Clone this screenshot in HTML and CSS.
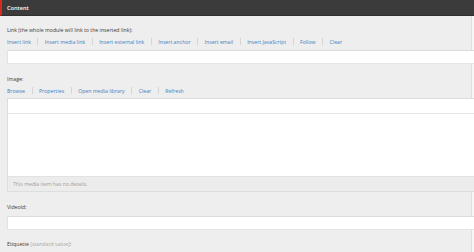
FILE: index.html
```html
<!DOCTYPE html>
<html>
<head>
<meta charset="utf-8">
<link rel="stylesheet" href="styles.css">
</head>
<body>
<div class="header">Content</div>
<div class="panel">
  <div class="label first">Link (the whole module will link to the inserted link):</div>
  <div class="links">
    <a>Insert link</a><span class="sep"></span>
    <a>Insert media link</a><span class="sep"></span>
    <a>Insert external link</a><span class="sep"></span>
    <a>Insert anchor</a><span class="sep"></span>
    <a>Insert email</a><span class="sep"></span>
    <a>Insert JavaScript</a><span class="sep"></span>
    <a>Follow</a><span class="sep"></span>
    <a>Clear</a>
  </div>
  <div class="input"></div>

  <div class="label gap">Image:</div>
  <div class="links">
    <a>Browse</a><span class="sep"></span>
    <a>Properties</a><span class="sep"></span>
    <a>Open media library</a><span class="sep"></span>
    <a>Clear</a><span class="sep"></span>
    <a>Refresh</a>
  </div>
  <div class="media">
    <div class="media-top"></div>
    <div class="media-body"></div>
    <div class="media-foot">This media item has no details.</div>
  </div>

  <div class="label gap">VideoId:</div>
  <div class="input video"></div>

  <div class="label last">Etiquette <span class="std">[standard value]</span>:</div>
</div>
</body>
</html>
```

FILE: styles.css
```css
html, body {
  margin: 0;
  padding: 0;
}
body {
  width: 474px;
  height: 252px;
  overflow: hidden;
  background: #f6f6f6;
  font-family: "Open Sans", "DejaVu Sans", sans-serif;
}
.header {
  height: 16px;
  box-sizing: border-box;
  background: #3b3b3b;
  border-left: 2px solid #d42a20;
  border-bottom: 1px solid #2e2e2e;
  padding-left: 5px;
  display: flex;
  align-items: center;
  color: #ffffff;
  font-weight: 600;
  font-size: 5.6px;
}
.panel {
  width: 472px;
  box-sizing: border-box;
  background: #eeeeee;
  border-right: 1px solid #dedede;
  padding: 10px 0 10px 7px;
  height: 236px;
}
.label {
  font-size: 5.2px;
  line-height: 8px;
  height: 8px;
  color: #3a3a3a;
  white-space: nowrap;
}
.label.gap {
  margin-top: 11px;
}
.label.last {
  margin-top: 10px;
}
.std {
  color: #a8a8a8;
}
.links {
  display: flex;
  align-items: center;
  height: 9px;
  margin-top: 3px;
  font-size: 5.2px;
  color: #3b82c4;
}
.links a {
  white-space: nowrap;
}
.sep {
  width: 1px;
  height: 7px;
  background: #d6d6d6;
  margin: 0 6.5px;
}
.input {
  height: 14px;
  box-sizing: border-box;
  margin-top: 4px;
  margin-right: -3px;
  background: #ffffff;
  border-top: 1px solid #dcdcdc;
  border-left: 1px solid #e2e2e2;
  border-bottom: 1px solid #e6e6e6;
}
.input.video {
  margin-top: 5px;
}
.media {
  margin-top: 3px;
  margin-right: -3px;
  height: 94px;
  box-sizing: border-box;
  border: 1px solid #dddddd;
  border-right: none;
  background: #ffffff;
  display: flex;
  flex-direction: column;
}
.media-top {
  height: 14px;
  border-bottom: 1px solid #e4e4e4;
}
.media-body {
  flex: 1;
}
.media-foot {
  height: 15px;
  box-sizing: border-box;
  background: #ececec;
  border-top: 1px solid #e2e2e2;
  padding-left: 5px;
  display: flex;
  align-items: center;
  font-size: 5.2px;
  color: #a0a0a0;
}
```
